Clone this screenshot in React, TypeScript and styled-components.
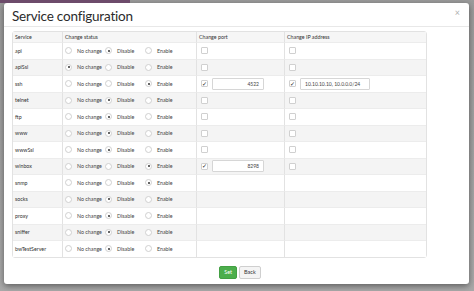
import React from "react";
import styled, { createGlobalStyle } from "styled-components";

const GlobalStyle = createGlobalStyle`
  html, body {
    margin: 0;
    padding: 0;
    width: 474px;
    height: 291px;
    overflow: hidden;
    background: #a3a3a3;
    font-family: Lato, "Open Sans", sans-serif;
  }
`;

const Backdrop = styled.div`
  position: relative;
  width: 474px;
  height: 291px;
  background: linear-gradient(#9b9b9b, #a9a9a9);
  padding: 3px 5px 0 4px;
  box-sizing: border-box;
`;

const TopStrip = styled.div`
  position: absolute;
  left: 0;
  top: 0;
  width: 130px;
  height: 3px;
  background: #6d4b6b;
`;

const Modal = styled.div`
  width: 465px;
  height: 281px;
  background: #fff;
  border-radius: 3px;
  box-shadow: 0 2px 6px rgba(0, 0, 0, 0.45);
  display: flex;
  flex-direction: column;
`;

const Header = styled.div`
  height: 24px;
  border-bottom: 1px solid #e8e8e8;
  display: flex;
  align-items: center;
  justify-content: space-between;
  padding: 0 9px 0 8px;
  box-sizing: border-box;
`;

const Title = styled.div`
  font-size: 13.5px;
  color: #2b2b2b;
  letter-spacing: -0.2px;
  padding-top: 2px;
`;

const Close = styled.div`
  font-size: 9px;
  color: #b0b0b0;
  margin-top: -5px;
`;

const Body = styled.div`
  padding: 4px 8px 0 8px;
`;

const Table = styled.table`
  width: 413px;
  border-collapse: separate;
  border-spacing: 0;
  border: 1px solid #e2e2e2;
  border-radius: 3px;
  table-layout: fixed;
  font-size: 5.3px;
  color: #333;
  white-space: nowrap;
`;

const Th = styled.th`
  height: 10px;
  padding: 0 0 0 2px;
  text-align: left;
  font-weight: normal;
  background: #f6f6f6;
  border-left: 1px solid #e2e2e2;
  overflow: hidden;
  &:first-child {
    border-left: none;
  }
`;

const Tr = styled.tr<{ $alt: boolean }>`
  height: 16.5px;
  background: ${(p) => (p.$alt ? "#f4f4f4" : "#fff")};
`;

const Td = styled.td`
  padding: 0 0 0 2px;
  border-left: 1px solid #e2e2e2;
  border-top: 1px solid #ececec;
  vertical-align: middle;
  overflow: hidden;
  &:first-child {
    border-left: none;
  }
`;

const StatusGroup = styled.div`
  display: flex;
  align-items: center;
  color: #444;
`;

const Option = styled.div`
  width: 40px;
  flex-shrink: 0;
  display: flex;
  align-items: center;
  gap: 5px;
`;

const Radio = styled.span<{ $on: boolean }>`
  width: 5px;
  height: 5px;
  border-radius: 50%;
  border: 0.6px solid #d0d0d0;
  background: #fff;
  display: inline-flex;
  align-items: center;
  justify-content: center;
  flex-shrink: 0;
  &::after {
    content: "";
    width: 2px;
    height: 2px;
    border-radius: 50%;
    background: ${(p) => (p.$on ? "#333" : "transparent")};
  }
`;

const Cell = styled.div`
  display: flex;
  align-items: center;
  gap: 4px;
  padding-left: 2px;
`;

const Check = styled.span`
  width: 5px;
  height: 5px;
  border: 0.6px solid #d0d0d0;
  border-radius: 1px;
  background: #fff;
  display: inline-flex;
  align-items: center;
  justify-content: center;
  flex-shrink: 0;
  font-size: 6px;
  line-height: 1;
  color: #222;
`;

const Input = styled.div<{ $w: number; $right?: boolean }>`
  width: ${(p) => p.$w}px;
  height: 12px;
  border: 0.6px solid #d6d6d6;
  border-radius: 1px;
  background: #fff;
  box-sizing: border-box;
  display: flex;
  align-items: center;
  justify-content: ${(p) => (p.$right ? "flex-end" : "flex-start")};
  padding: 0 4px;
  font-size: 5px;
  color: #444;
`;

const Footer = styled.div`
  display: flex;
  justify-content: center;
  gap: 2px;
  padding-top: 8px;
  padding-left: 7px;
`;

const Button = styled.div<{ $primary?: boolean }>`
  height: 13px;
  padding: 0 4px;
  border-radius: 2px;
  font-size: 5.5px;
  display: flex;
  align-items: center;
  box-sizing: border-box;
  background: ${(p) => (p.$primary ? "#4cae4c" : "#f4f4f4")};
  color: ${(p) => (p.$primary ? "#fff" : "#333")};
  border: 1px solid ${(p) => (p.$primary ? "#43a043" : "#cfcfcf")};
`;

type Row = {
  name: string;
  status: 0 | 1 | 2;
  port?: string | null;
  ip?: string | null;
  showPort: boolean;
  showIp: boolean;
};

const rows: Row[] = [
  { name: "api", status: 1, showPort: true, showIp: true },
  { name: "apiSsl", status: 0, showPort: true, showIp: true },
  { name: "ssh", status: 2, showPort: true, showIp: true, port: "4522", ip: "10.10.10.10, 10.0.0.0/24" },
  { name: "telnet", status: 1, showPort: true, showIp: true },
  { name: "ftp", status: 1, showPort: true, showIp: true },
  { name: "www", status: 1, showPort: true, showIp: true },
  { name: "wwwSsl", status: 1, showPort: true, showIp: true },
  { name: "winbox", status: 2, showPort: true, showIp: true, port: "8298" },
  { name: "snmp", status: 2, showPort: false, showIp: false },
  { name: "socks", status: 1, showPort: false, showIp: false },
  { name: "proxy", status: 1, showPort: false, showIp: false },
  { name: "sniffer", status: 1, showPort: false, showIp: false },
  { name: "bwTestServer", status: 1, showPort: false, showIp: false },
];

const labels = ["No change", "Disable", "Enable"];
const colWidths = [49, 134, 88, 142];

export default function App() {
  return (
    <>
      <GlobalStyle />
      <Backdrop>
        <TopStrip />
        <Modal>
          <Header>
            <Title>Service configuration</Title>
            <Close>×</Close>
          </Header>
          <Body>
            <Table>
              <colgroup>
                {colWidths.map((w, i) => (
                  <col key={i} style={{ width: w }} />
                ))}
              </colgroup>
              <thead>
                <tr>
                  <Th>Service</Th>
                  <Th>Change status</Th>
                  <Th>Change port</Th>
                  <Th>Change IP address</Th>
                </tr>
              </thead>
              <tbody>
                {rows.map((r, i) => (
                  <Tr key={r.name} $alt={i % 2 === 1}>
                    <Td>{r.name}</Td>
                    <Td>
                      <StatusGroup>
                        {labels.map((l, k) => (
                          <Option key={l}>
                            <Radio $on={r.status === k} />
                            {l}
                          </Option>
                        ))}
                      </StatusGroup>
                    </Td>
                    <Td>
                      {r.showPort && (
                        <Cell>
                          <Check>{r.port ? "✓" : ""}</Check>
                          {r.port && (
                            <Input $w={52} $right>
                              {r.port}
                            </Input>
                          )}
                        </Cell>
                      )}
                    </Td>
                    <Td>
                      {r.showIp && (
                        <Cell>
                          <Check>{r.ip ? "✓" : ""}</Check>
                          {r.ip && <Input $w={70}>{r.ip}</Input>}
                        </Cell>
                      )}
                    </Td>
                  </Tr>
                ))}
              </tbody>
            </Table>
            <Footer>
              <Button $primary>Set</Button>
              <Button>Back</Button>
            </Footer>
          </Body>
        </Modal>
      </Backdrop>
    </>
  );
}
